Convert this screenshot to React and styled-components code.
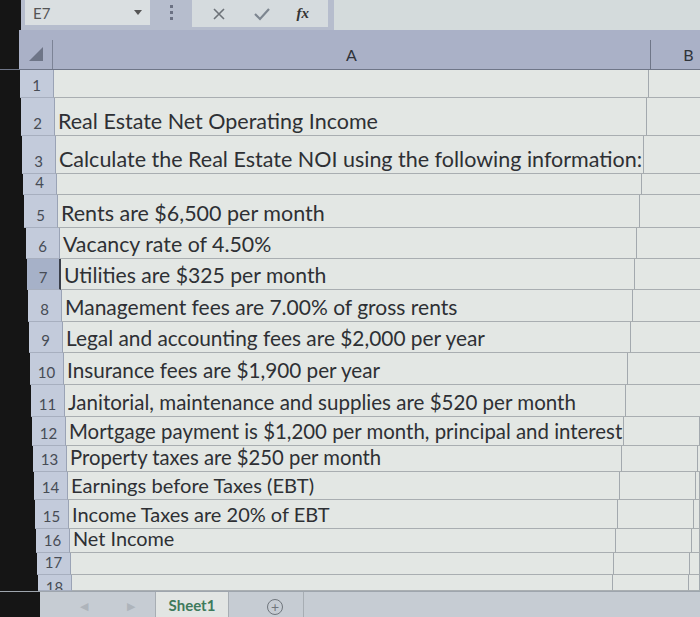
import React from 'react'
import styled, { createGlobalStyle } from 'styled-components'

const GlobalStyle = createGlobalStyle`
  html, body {
    margin: 0;
    padding: 0;
    background: #151515;
  }
  body {
    width: 700px;
    height: 617px;
    overflow: hidden;
    font-family: Lato, 'Open Sans', sans-serif;
  }
`

// photo is taken at an angle, so the left edge drifts right, column A narrows
// and the text gets a little smaller going down
const leftAt = (y) => Math.round(20 + (y - 90) * 0.036)
const rightAt = (y) => Math.round(651 - (y - 55) * 0.072)
const sizeAt = (y) => +(21.5 * Math.min(1, 1 - (y - 210) * 0.00023)).toFixed(2)

const rows = [
  { n: 1, h: 28, text: '' },
  { n: 2, h: 38, text: 'Real Estate Net Operating Income' },
  { n: 3, h: 38, text: 'Calculate the Real Estate NOI using the following information:' },
  { n: 4, h: 21, text: '' },
  { n: 5, h: 33, text: 'Rents are $6,500 per month' },
  { n: 6, h: 31, text: 'Vacancy rate of 4.50%' },
  { n: 7, h: 31, text: 'Utilities are $325 per month', active: true },
  { n: 8, h: 32, text: 'Management fees are 7.00% of gross rents' },
  { n: 9, h: 31, text: 'Legal and accounting fees are $2,000 per year' },
  { n: 10, h: 32, text: 'Insurance fees are $1,900 per year' },
  { n: 11, h: 32, text: 'Janitorial, maintenance and supplies are $520 per month' },
  { n: 12, h: 29, text: 'Mortgage payment is $1,200 per month, principal and interest' },
  { n: 13, h: 26, text: 'Property taxes are $250 per month' },
  { n: 14, h: 28, text: 'Earnings before Taxes (EBT)' },
  { n: 15, h: 29, text: 'Income Taxes are 20% of EBT' },
  { n: 16, h: 24, text: 'Net Income' },
  { n: 17, h: 22, text: '' },
  { n: 18, h: 16, text: '', clip: true },
]

const Screen = styled.div`
  width: 700px;
  height: 617px;
  display: flex;
  flex-direction: column;
  overflow: hidden;
  background: #151515;
`

const Toolbar = styled.div`
  height: 30px;
  display: flex;
  align-items: flex-start;
  background: #b6bdcd;
  flex-shrink: 0;
`

const Bezel = styled.div`
  width: ${(p) => p.$w}px;
  align-self: stretch;
  background: #151515;
  flex-shrink: 0;
`

const NameBox = styled.div`
  width: 125px;
  height: 25px;
  margin-left: 4px;
  background: #dadfe1;
  display: flex;
  align-items: center;
  justify-content: space-between;
  padding: 0 8px 0 8px;
  box-sizing: border-box;
  font-size: 15px;
  color: #555;
  flex-shrink: 0;
`

const Caret = styled.span`
  width: 0;
  height: 0;
  border-left: 4px solid transparent;
  border-right: 4px solid transparent;
  border-top: 5px solid #555;
`

const Dots = styled.div`
  width: 42px;
  flex-shrink: 0;
  display: flex;
  flex-direction: column;
  align-items: center;
  gap: 3px;
  padding-top: 5px;
  span {
    width: 3px;
    height: 3px;
    background: #6b7183;
  }
`

const FxButtons = styled.div`
  width: 136px;
  height: 27px;
  flex-shrink: 0;
  background: #d5dbde;
  display: flex;
  align-items: center;
  justify-content: space-around;
  padding: 0 6px;
  box-sizing: border-box;
`

const Fx = styled.span`
  font-family: 'Liberation Serif', serif;
  font-style: italic;
  font-weight: bold;
  font-size: 15px;
  color: #333;
`

const FormulaBar = styled.div`
  flex: 1;
  height: 30px;
  margin-left: 6px;
  background: #d4dbdc;
`

const HeaderRow = styled.div`
  height: 40px;
  display: flex;
  flex-shrink: 0;
  background: #aab1c7;
  border-bottom: 1px solid #6f7688;
  box-sizing: border-box;
`

const Corner = styled.div`
  width: 34px;
  flex-shrink: 0;
  display: flex;
  align-items: flex-end;
  justify-content: center;
  padding-bottom: 8px;
  box-sizing: border-box;
  border-right: 1px solid #7c8396;
  margin-top: 10px;
`

const ColHead = styled.div`
  width: ${(p) => (p.$w ? `${p.$w}px` : 'auto')};
  flex: ${(p) => (p.$w ? 'none' : 1)};
  display: flex;
  align-items: flex-end;
  justify-content: center;
  padding-bottom: 5px;
  box-sizing: border-box;
  font-size: 16px;
  color: #2f333a;
  border-right: ${(p) => (p.$line ? '1px solid #6f7688' : 'none')};
  margin-top: 10px;
`

const Row = styled.div`
  height: ${(p) => p.$h}px;
  display: flex;
  flex-shrink: 0;
`

const RowHead = styled.div`
  width: 34px;
  flex-shrink: 0;
  background: ${(p) => (p.$active ? '#a6b1c8' : '#c3cbdb')};
  border-bottom: 1px solid #a7afbf;
  border-right: ${(p) => (p.$active ? '2px solid #3a3f4a' : '1px solid #9aa3b5')};
  box-sizing: border-box;
  display: flex;
  align-items: ${(p) => (p.$clip ? 'flex-start' : 'flex-end')};
  justify-content: center;
  padding: ${(p) => (p.$clip ? '3px 0 0' : '0 0 3px')};
  font-size: 15px;
  color: #474c55;
  overflow: hidden;
  line-height: 18px;
`

const Cell = styled.div`
  width: ${(p) => (p.$w ? `${p.$w}px` : 'auto')};
  flex: ${(p) => (p.$w ? 'none' : 1)};
  background: #e3e7e4;
  border-bottom: 1px solid #a9aeb1;
  border-right: 1px solid #a3a9ae;
  box-sizing: border-box;
  display: flex;
  align-items: flex-end;
  padding: 0 0 2px 3px;
  font-size: ${(p) => p.$size || 21.5}px;
  color: #2e3034;
  white-space: nowrap;
  line-height: 24px;
  z-index: ${(p) => (p.$spill ? 1 : 0)};
`

const TabBar = styled.div`
  flex: 1;
  display: flex;
  align-items: flex-start;
  background: #c6ccd3;
  border-top: 1px solid #9ea5ad;
`

const Nav = styled.div`
  width: 115px;
  height: 28px;
  display: flex;
  align-items: center;
  justify-content: space-around;
  font-size: 11px;
  color: #aeb4bb;
  padding-left: 20px;
  box-sizing: border-box;
`

const Tab = styled.div`
  width: 74px;
  height: 27px;
  background: #e2e5e3;
  display: flex;
  align-items: center;
  justify-content: center;
  font-size: 15px;
  font-weight: bold;
  color: #3e7a5c;
  border-bottom: 2px solid #3e7a5c;
  box-sizing: border-box;
  border-left: 1px solid #a7adb3;
  border-right: 1px solid #a7adb3;
`

const AddSheet = styled.div`
  width: 14px;
  height: 14px;
  margin: 7px 0 0 38px;
  border: 1.5px solid #6f757c;
  border-radius: 50%;
  display: flex;
  align-items: center;
  justify-content: center;
  font-size: 14px;
  line-height: 14px;
  color: #6f757c;
`

const TabRest = styled.div`
  flex: 1;
  height: 28px;
  border-left: 1px solid #a7adb3;
  margin-left: 20px;
`

function App() {
  let y = 70
  const laid = rows.map((r) => {
    const mid = y + r.h / 2
    y += r.h
    return { ...r, left: leftAt(mid), right: rightAt(mid), size: sizeAt(mid) }
  })
  const headLeft = leftAt(55)

  return (
    <>
      <GlobalStyle />
      <Screen>
        <Toolbar>
          <Bezel $w={21} />
          <NameBox>
            E7
            <Caret />
          </NameBox>
          <Dots>
            <span />
            <span />
            <span />
          </Dots>
          <FxButtons>
            <svg width="16" height="16" viewBox="0 0 16 16">
              <path d="M3 3 L13 13 M13 3 L3 13" stroke="#6d7278" strokeWidth="1.6" fill="none" />
            </svg>
            <svg width="18" height="16" viewBox="0 0 18 16">
              <path d="M2 8 L7 13 L16 3" stroke="#7d8690" strokeWidth="2.2" fill="none" />
            </svg>
            <Fx>fx</Fx>
          </FxButtons>
          <FormulaBar />
        </Toolbar>

        <HeaderRow>
          <Bezel $w={headLeft} />
          <Corner>
            <svg width="14" height="14" viewBox="0 0 14 14">
              <path d="M14 0 L14 14 L0 14 Z" fill="#6e7587" />
            </svg>
          </Corner>
          <ColHead $w={rightAt(55) - headLeft - 34} $line>
            A
          </ColHead>
          <ColHead $w={76} $line>
            B
          </ColHead>
          <ColHead />
        </HeaderRow>

        {laid.map((r) => (
          <Row key={r.n} $h={r.h}>
            <Bezel $w={r.left} />
            <RowHead $active={r.active} $clip={r.clip}>
              {r.n}
            </RowHead>
            <Cell $w={r.right - r.left - 34} $size={r.size} $spill>
              {r.text}
            </Cell>
            <Cell $w={76} />
            <Cell />
          </Row>
        ))}

        <TabBar>
          <Bezel $w={40} />
          <Nav>
            <span>◀</span>
            <span>▶</span>
          </Nav>
          <Tab>Sheet1</Tab>
          <AddSheet>+</AddSheet>
          <TabRest />
        </TabBar>
      </Screen>
    </>
  )
}

export default App
